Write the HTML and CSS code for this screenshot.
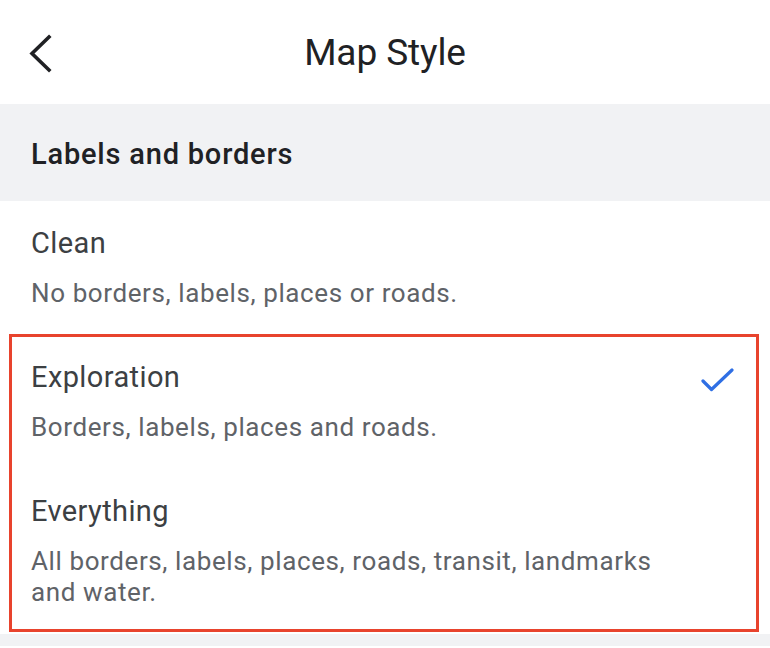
FILE: index.html
```html
<!DOCTYPE html>
<html>
<head>
<meta charset="utf-8">
<link rel="stylesheet" href="styles.css">
</head>
<body>
<header class="topbar">
  <button class="back" aria-label="Back">
    <svg width="30" height="40" viewBox="0 0 30 40"><path d="M22 3 L5 19.5 L22 36" fill="none" stroke="#202124" stroke-width="3.6" stroke-linecap="square" stroke-linejoin="miter"/></svg>
  </button>
  <h1 class="title">Map Style</h1>
</header>
<div class="section">Labels and borders</div>
<div class="option">
  <div class="text">
    <div class="name">Clean</div>
    <div class="desc">No borders, labels, places or roads.</div>
  </div>
</div>
<div class="highlight">
  <div class="option">
    <div class="text">
      <div class="name">Exploration</div>
      <div class="desc">Borders, labels, places and roads.</div>
    </div>
    <svg class="check" width="36" height="28" viewBox="0 0 36 28"><path d="M2 13 L10.5 21.5 L31 2" fill="none" stroke="#2f6fe4" stroke-width="3.2" stroke-linecap="round" stroke-linejoin="round"/></svg>
  </div>
  <div class="option">
    <div class="text">
      <div class="name">Everything</div>
      <div class="desc">All borders, labels, places, roads, transit, landmarks and water.</div>
    </div>
  </div>
</div>
<div class="footer-band"></div>
</body>
</html>
```
FILE: styles.css
```css
* { box-sizing: border-box; }
html, body { margin: 0; padding: 0; background: #fff; }
body { font-family: Roboto, "Noto Sans", sans-serif; color: #202124; width: 770px; }

.topbar {
  height: 104px;
  display: flex;
  align-items: center;
  justify-content: center;
  position: relative;
}
.back {
  position: absolute;
  left: 27px;
  top: 34px;
  border: 0;
  background: none;
  padding: 0;
  display: flex;
}
.title {
  margin: 0;
  font-size: 37px;
  font-weight: 400;
  letter-spacing: -0.1px;
  color: #202124;
  line-height: 40px;
  padding-top: 2px;
}

.section {
  height: 97px;
  background: #f1f2f4;
  display: flex;
  align-items: center;
  padding-left: 31px;
  font-size: 29px;
  letter-spacing: 0.8px;
  font-weight: 500;
  color: #202124;
  padding-top: 2px;
}

.option {
  display: flex;
  align-items: flex-start;
  padding: 24px 24px 26px 31px;
  height: 134px;
}
.highlight .option:last-child { height: auto; }
.text { flex: 1; }
.name {
  font-size: 29px;
  letter-spacing: 0.4px;
  line-height: 36px;
  color: #3c4043;
}
.desc {
  margin-top: 17px;
  font-size: 26px;
  letter-spacing: 0.6px;
  line-height: 31px;
  color: #5f6368;
  max-width: 640px;
}
.check { margin-top: 9px; margin-right: 9px; }

.highlight { position: relative; }
.highlight::after {
  content: "";
  position: absolute;
  left: 9px;
  right: 11px;
  top: -1px;
  bottom: 2px;
  border: 3px solid #e8432d;
  pointer-events: none;
}

.footer-band { height: 12px; background: #f1f2f4; }
```
